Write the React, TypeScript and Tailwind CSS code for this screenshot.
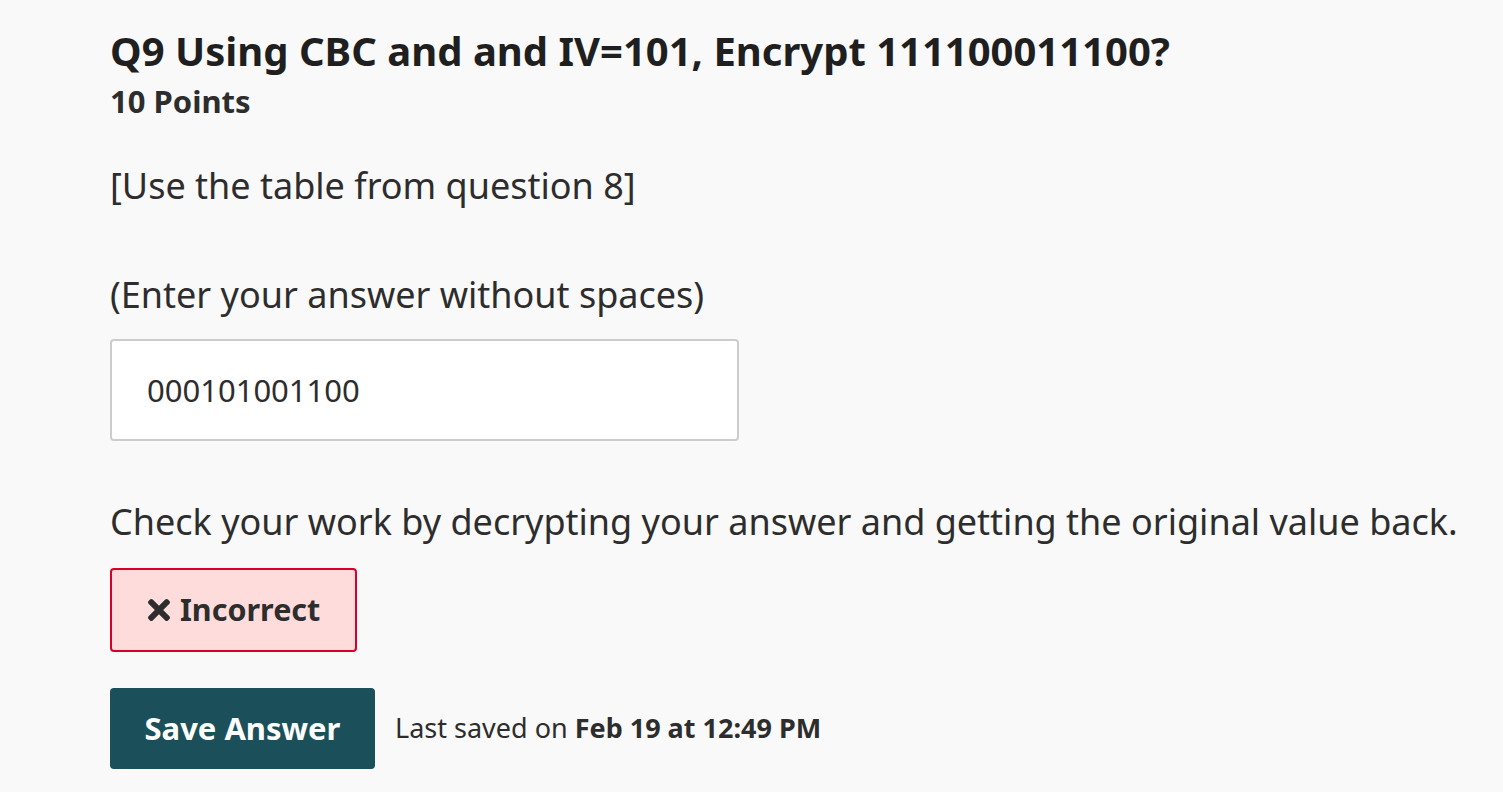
import React from 'react';

function TimesIcon() {
  return (
    <svg width="22" height="22" viewBox="0 80 352 352" className="mr-[10px] fill-[#2d2d2d]">
      <path d="M242.72 256l100.07-100.07c12.28-12.28 12.28-32.19 0-44.48l-22.24-22.24c-12.28-12.28-32.19-12.28-44.48 0L176 189.28 75.93 89.21c-12.28-12.28-32.19-12.28-44.48 0L9.21 111.45c-12.28 12.28-12.28 32.19 0 44.48L109.28 256 9.21 356.07c-12.28 12.28-12.280 32.19 0 44.48l22.24 22.24c12.28 12.28 32.2 12.28 44.48 0L176 322.72l100.07 100.07c12.28 12.28 32.2 12.28 44.48 0l22.24-22.24c12.28-12.28 12.28-32.19 0-44.48L242.72 256z" />
    </svg>
  );
}

export default function App() {
  return (
    <div className="min-h-screen bg-[#f9f9f9] text-[#2d2d2d] font-['Noto_Sans',sans-serif]">
      <div className="pl-[110px] pt-[26px]">
        <h1 className="text-[40px] leading-[50px] font-bold text-[#1f1f1f]">
          Q9 Using CBC and and IV=101, Encrypt 111100011100?
        </h1>
        <div className="mt-[7px] text-[31px] leading-[36px] font-bold">10 Points</div>

        <p className="mt-[43px] text-[36px] leading-[48px]">[Use the table from question 8]</p>
        <p className="mt-[61px] text-[36px] leading-[48px]">(Enter your answer without spaces)</p>

        <div className="mt-[20px] w-[629px] h-[102px] bg-white border-2 border-[#cccccc] rounded-[4px] flex items-center pl-[35px] text-[31px]">
          000101001100
        </div>

        <p className="mt-[57px] text-[36px] leading-[48px]">
          Check your work by decrypting your answer and getting the original value back.
        </p>

        <div className="mt-[22px] inline-flex items-center h-[84px] pl-[36px] pr-[35px] bg-[#ffdcdc] border-2 border-[#d6002a] rounded-[4px] text-[30.5px] font-bold">
          <TimesIcon />
          Incorrect
        </div>

        <div className="mt-[36px] flex items-center gap-[20px]">
          <button className="h-[81px] w-[265px] bg-[#1b4f5a] rounded-[4px] text-white text-[31px] font-bold">
            Save Answer
          </button>
          <span className="text-[27px]">
            Last saved on <b>Feb 19 at 12:49 PM</b>
          </span>
        </div>
      </div>
    </div>
  );
}
